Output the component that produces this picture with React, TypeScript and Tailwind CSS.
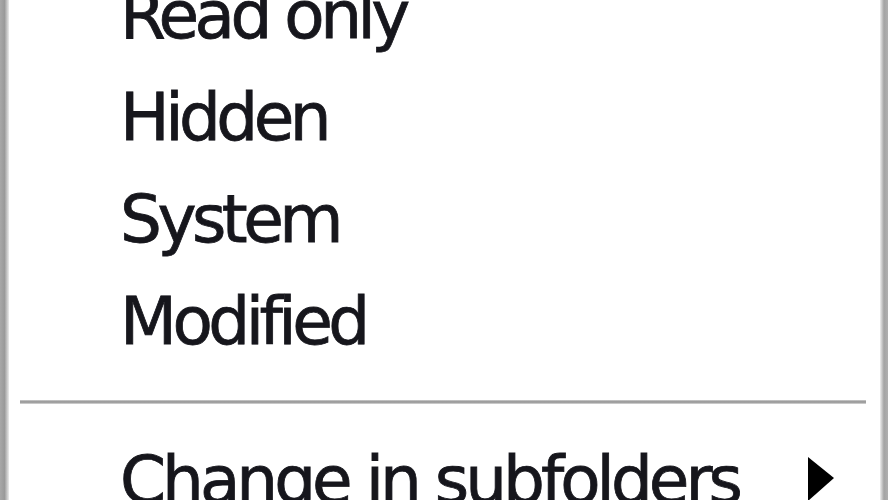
import React from 'react';

const items = ['Read only', 'Hidden', 'System', 'Modified'];

export default function App() {
  return (
    <div className="w-[888px] h-[500px] overflow-hidden bg-white flex" style={{ fontFamily: '"DejaVu Sans", Verdana, sans-serif' }}>
      {/* left frame edge */}
      <div className="w-[9px] h-full bg-gradient-to-r from-[#a8a8a8] via-[#9a9a9a] to-[#ececec]" />

      <div className="flex-1 flex flex-col -mt-[35px]">
        {items.map((label) => (
          <div key={label} className="h-[102px] shrink-0 pl-[111px] text-[66px] leading-[102px] text-[#16161c] tracking-[-4.5px] whitespace-nowrap [-webkit-text-stroke:0.8px_#16161c]">
            {label}
          </div>
        ))}

        {/* separator */}
        <div className="h-[57px] shrink-0 flex items-center pl-[11px] pr-[14px]">
          <div className="h-[4px] w-full bg-gradient-to-b from-[#cfcfcf] via-[#8e8e8e] to-[#dcdcdc]" />
        </div>

        <div className="h-[102px] shrink-0 pl-[111px] pr-[46px] flex items-center justify-between text-[66px] leading-[102px] text-[#16161c] tracking-[-4px] whitespace-nowrap [-webkit-text-stroke:0.8px_#16161c]">
          <span>Change in subfolders</span>
          <svg width="26" height="44" viewBox="0 0 26 44" className="mt-[-4px]">
            <polygon points="0,0 26,21 0,44" fill="#000" />
          </svg>
        </div>
      </div>

      {/* right frame edge */}
      <div className="w-[8px] h-full bg-gradient-to-r from-[#eeeeee] via-[#a4a4a4] to-[#b0b0b0]" />
    </div>
  );
}
